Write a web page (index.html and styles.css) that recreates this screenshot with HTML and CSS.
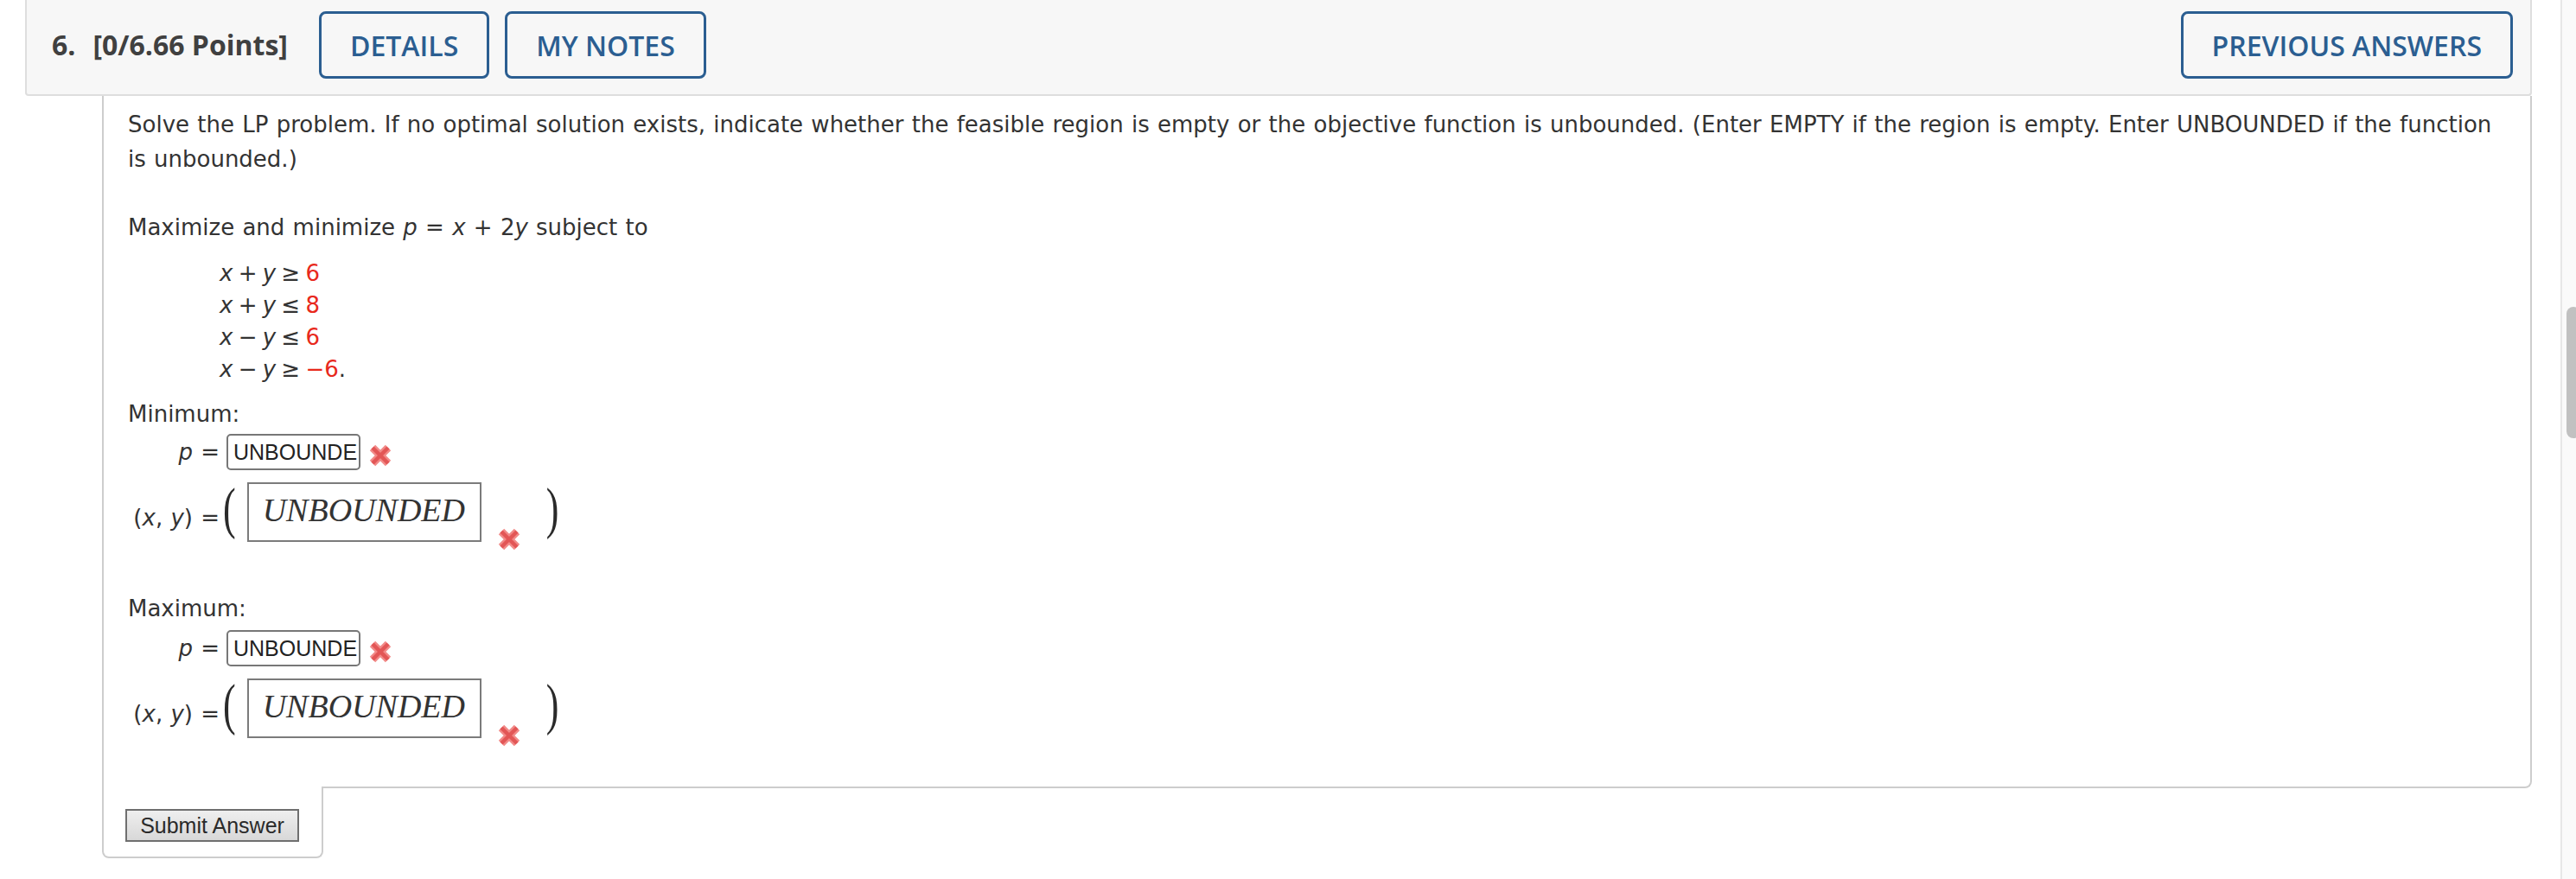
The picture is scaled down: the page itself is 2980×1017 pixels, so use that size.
FILE: index.html
```html
<!DOCTYPE html>
<html lang="en">
<head>
<meta charset="utf-8">
<title>Question 6</title>
<link rel="stylesheet" href="styles.css">
</head>
<body>
<div class="page">
  <main class="main">
    <section class="question">
      <header class="qhead">
        <h2 class="qtitle"><span class="qnum">6.</span><span class="qpts">[0/6.66 Points]</span></h2>
        <button class="hbtn" type="button">DETAILS</button>
        <button class="hbtn" type="button">MY NOTES</button>
        <button class="hbtn hbtn-right" type="button">PREVIOUS ANSWERS</button>
      </header>
      <div class="qbody">
        <p class="prompt">Solve the LP problem. If no optimal solution exists, indicate whether the feasible region is empty or the objective function is unbounded. (Enter EMPTY if the region is empty. Enter UNBOUNDED if the function is unbounded.)</p>
        <p class="objective">Maximize and minimize <i>p</i> = <i>x</i> + 2<i>y</i> subject to</p>
        <div class="constraints">
          <div class="con"><i>x</i> + <i>y</i> ≥ <span class="num">6</span></div>
          <div class="con"><i>x</i> + <i>y</i> ≤ <span class="num">8</span></div>
          <div class="con"><i>x</i> − <i>y</i> ≤ <span class="num">6</span></div>
          <div class="con"><i>x</i> − <i>y</i> ≥ <span class="num">−6</span>.</div>
        </div>

        <div class="part">
          <div class="part-label">Minimum:</div>
          <div class="answers">
            <div class="lbl lbl-p"><i>p</i> =</div>
            <div class="cell cell-p">
              <input class="field" type="text" value="UNBOUNDED" readonly>
              <svg class="xmark" viewBox="0 0 28 28" width="28" height="28" aria-hidden="true"><path d="M5 5 L23 23 M23 5 L5 23" stroke="#f28a88" stroke-width="9" fill="none"/><path d="M5 5 L23 23 M23 5 L5 23" stroke="#e25656" stroke-width="4.5" fill="none"/></svg>
            </div>
            <div class="lbl lbl-xy">(<i>x</i>, <i>y</i>) =</div>
            <div class="cell cell-xy">
              <span class="paren">(</span>
              <div class="mathbox">UNBOUNDED</div>
              <svg class="xmark xmark-sub" viewBox="0 0 28 28" width="28" height="28" aria-hidden="true"><path d="M5 5 L23 23 M23 5 L5 23" stroke="#f28a88" stroke-width="9" fill="none"/><path d="M5 5 L23 23 M23 5 L5 23" stroke="#e25656" stroke-width="4.5" fill="none"/></svg>
              <span class="paren paren-r">)</span>
            </div>
          </div>
        </div>

        <div class="part part-max">
          <div class="part-label">Maximum:</div>
          <div class="answers">
            <div class="lbl lbl-p"><i>p</i> =</div>
            <div class="cell cell-p">
              <input class="field" type="text" value="UNBOUNDED" readonly>
              <svg class="xmark" viewBox="0 0 28 28" width="28" height="28" aria-hidden="true"><path d="M5 5 L23 23 M23 5 L5 23" stroke="#f28a88" stroke-width="9" fill="none"/><path d="M5 5 L23 23 M23 5 L5 23" stroke="#e25656" stroke-width="4.5" fill="none"/></svg>
            </div>
            <div class="lbl lbl-xy">(<i>x</i>, <i>y</i>) =</div>
            <div class="cell cell-xy">
              <span class="paren">(</span>
              <div class="mathbox">UNBOUNDED</div>
              <svg class="xmark xmark-sub" viewBox="0 0 28 28" width="28" height="28" aria-hidden="true"><path d="M5 5 L23 23 M23 5 L5 23" stroke="#f28a88" stroke-width="9" fill="none"/><path d="M5 5 L23 23 M23 5 L5 23" stroke="#e25656" stroke-width="4.5" fill="none"/></svg>
              <span class="paren paren-r">)</span>
            </div>
          </div>
        </div>
      </div>
      <div class="qfoot">
        <button class="submit" type="button">Submit Answer</button>
      </div>
    </section>
  </main>
  <div class="scrolltrack"><div class="thumb"></div></div>
</div>
</body>
</html>
```

FILE: styles.css
```css
* { box-sizing: border-box; }

html, body {
  margin: 0;
  padding: 0;
  background: #fff;
  overflow: hidden;
}

body {
  font-family: "DejaVu Sans", Verdana, sans-serif;
  color: #333;
}

.page {
  display: flex;
  height: 1017px;
}

.main {
  flex: 1;
  min-width: 0;
  padding: 0 33px 0 29px;
}

/* ---------- header ---------- */
.qhead {
  display: flex;
  align-items: center;
  background: #f7f7f7;
  border: 2px solid #dedede;
  border-top: 0;
  border-radius: 0 0 4px 4px;
  padding: 13px 20px 18px 29px;
}

.qtitle {
  display: flex;
  margin: 0 36px 0 0;
  font-family: "Open Sans", sans-serif;
  font-weight: 700;
  font-size: 32px;
  line-height: 1;
  color: #404040;
}

.qnum { margin-right: 20px; }

.hbtn {
  height: 78px;
  padding: 0 33px;
  margin: 0 18px 0 0;
  font-family: "Open Sans", sans-serif;
  font-weight: 600;
  font-size: 32px;
  color: #2b5e91;
  background: transparent;
  border: 3px solid #2b5e91;
  border-radius: 8px;
}

.hbtn-right {
  margin-left: auto;
  margin-right: 0;
}

/* ---------- body ---------- */
.qbody {
  margin-left: 89px;
  background: #fff;
  border: 2px solid #cdcdcd;
  border-top: 0;
  border-radius: 0 0 8px 0;
  padding: 13px 28px 45px 28px;
  font-size: 26px;
  line-height: 40px;
  word-spacing: 1px;
}

.prompt { margin: 0 0 39px; }

.objective { margin: 0 0 15px; }

.constraints {
  padding-left: 106px;
  word-spacing: -2px;
}

.con { line-height: 37px; }

.num { color: #e8291c; }

.part-label {
  margin-top: 13px;
  line-height: 40px;
}

.part-max .part-label { margin-top: 46px; }

.answers {
  display: grid;
  grid-template-columns: 104px auto;
  justify-content: start;
  row-gap: 14px;
  margin: 3px 0 0 2px;
}

.part-max .answers { margin-top: 5px; }

.lbl {
  text-align: right;
  white-space: nowrap;
}

.lbl-p { line-height: 42px; }

.lbl-xy {
  padding-top: 21px;
  line-height: 40px;
}

.cell-p {
  display: flex;
  align-items: center;
  padding-left: 8px;
}

.field {
  width: 155px;
  height: 42px;
  padding: 0 2px 0 6px;
  border: 2px solid #777;
  border-radius: 5px;
  background: #fff;
  font-family: "Liberation Sans", Arial, sans-serif;
  font-size: 25px;
  color: #222;
  outline: none;
}

.xmark {
  display: block;
  flex: none;
  margin: 7px 0 0 9px;
}

.cell-xy {
  display: flex;
  align-items: flex-start;
}

.paren {
  display: block;
  height: 44px;
  margin: 9px 0 0 4px;
  font-family: "Liberation Serif", "Times New Roman", serif;
  font-size: 44px;
  line-height: 44px;
  color: #2a2a2a;
  transform: scaleY(1.5);
}

.mathbox {
  width: 271px;
  height: 69px;
  margin-left: 13px;
  padding-left: 16px;
  border: 2px solid #7b7b7b;
  font-family: "Liberation Serif", "Times New Roman", serif;
  font-style: italic;
  font-size: 38px;
  line-height: 60px;
  word-spacing: 0;
  color: #333;
  white-space: nowrap;
}

.xmark-sub { margin: 52px 0 0 18px; }

.paren-r { margin-left: 29px; }

/* ---------- footer tab ---------- */
.qfoot {
  width: max-content;
  margin: -2px 0 0 89px;
  background: #fff;
  border: 2px solid #cdcdcd;
  border-top: 0;
  border-radius: 0 0 8px 8px;
  padding: 26px 26px 17px 25px;
}

.submit {
  display: block;
  width: 201px;
  height: 38px;
  padding: 0;
  font-family: "Liberation Sans", Arial, sans-serif;
  font-size: 25px;
  color: #2a2a2a;
  background: linear-gradient(#efefef, #d8d8d8);
  border: 2px solid #6f6f6f;
  border-radius: 0;
}

/* ---------- scrollbar ---------- */
.scrolltrack {
  flex: none;
  width: 18px;
  background: #fafafa;
  border-left: 2px solid #e7e7e7;
  overflow: hidden;
}

.thumb {
  width: 16px;
  height: 152px;
  margin: 355px 0 0 5px;
  border-radius: 8px;
  background: #c1c1c1;
}
```
